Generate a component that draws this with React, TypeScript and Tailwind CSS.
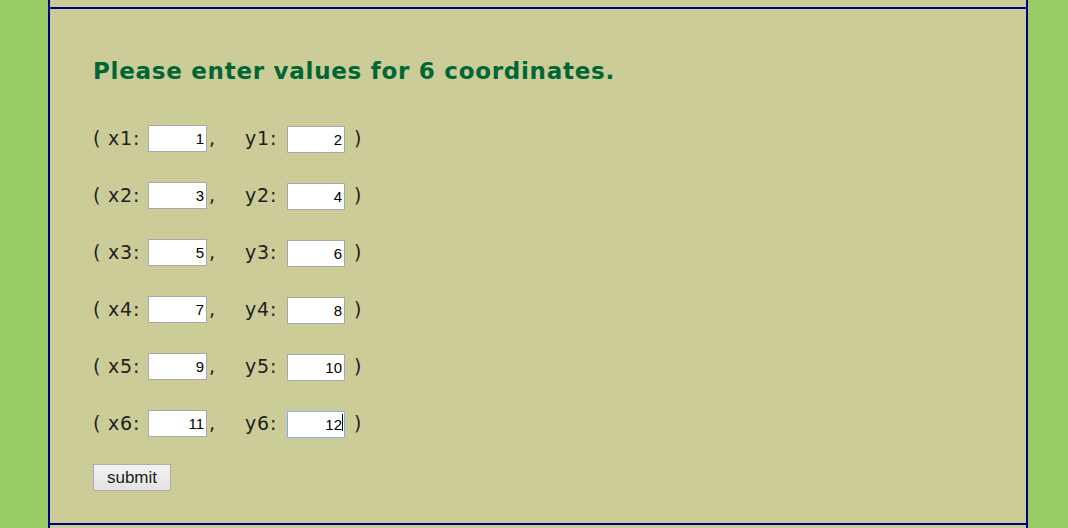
import { useState } from 'react';

const ROWS = [
  [1, 2],
  [3, 4],
  [5, 6],
  [7, 8],
  [9, 10],
  [11, 12],
];

export default function App() {
  const [values, setValues] = useState(ROWS.map(r => r.map(String)));

  const update = (i: number, j: number, v: string) => {
    setValues(prev => prev.map((row, ri) => (ri === i ? row.map((c, ci) => (ci === j ? v : c)) : row)));
  };

  return (
    <div className="h-[528px] w-[1068px] overflow-hidden bg-[#99cc66]">
      <div className="ml-[48px] flex w-[980px] flex-col">
        {/* tail of the section above */}
        <div className="h-[7px] border-x-2 border-[#000080] bg-[#cccc99]" />

        {/* coordinates form */}
        <form
          className="flex h-[518px] flex-col border-2 border-[#000080] bg-[#cccc99] pl-[43px]"
          onSubmit={e => e.preventDefault()}
        >
          <h2 className="mt-[48px] text-[23px] leading-[28px] font-bold tracking-[0.73px] text-[#006633] [font-family:'DejaVu_Sans',Verdana,sans-serif]">
            Please enter values for 6 coordinates.
          </h2>

          <div className="mt-[40px] flex flex-col gap-[30px] text-[19px] tracking-[0.8px] text-[#1f1f1f] [font-family:'DejaVu_Sans',Tahoma,sans-serif]">
            {values.map((row, i) => (
              <div key={i} className="flex h-[27px] items-center">
                <span className="w-[55px] whitespace-pre">{`( x${i + 1}:`}</span>
                <input
                  value={row[0]}
                  onChange={e => update(i, 0, e.target.value)}
                  className="h-[27px] w-[59px] border border-[#a9a9a9] bg-white pr-[2px] text-right text-[15px] tracking-normal text-black outline-none [font-family:'Liberation_Sans',Arial,sans-serif]"
                />
                <span className="w-[38px] pl-[2px]">,</span>
                <span className="w-[42px] whitespace-pre">{`y${i + 1}:`}</span>
                <div className="relative">
                  <input
                    value={row[1]}
                    onChange={e => update(i, 1, e.target.value)}
                    className={`h-[27px] w-[58px] border bg-white pr-[2px] text-right text-[15px] tracking-normal text-black outline-none [font-family:'Liberation_Sans',Arial,sans-serif] ${
                      i === 5 ? 'border-[#7eb4ea]' : 'border-[#a9a9a9]'
                    }`}
                  />
                  {/* caret in the focused field */}
                  {i === 5 && <span className="absolute top-[5px] right-[2px] h-[17px] w-px bg-black" />}
                </div>
                <span className="ml-[9px]">)</span>
              </div>
            ))}
          </div>

          <div className="mt-[27px]">
            <button
              type="submit"
              className="h-[27px] w-[78px] border border-[#acacac] bg-gradient-to-b from-[#f2f2f2] to-[#e3e3e3] text-[17px] text-[#1a1a1a] [font-family:'Liberation_Sans',Arial,sans-serif]"
            >
              submit
            </button>
          </div>
        </form>

        {/* top of the section below */}
        <div className="h-[3px] border-x-2 border-[#000080] bg-[#cccc99]" />
      </div>
    </div>
  );
}
